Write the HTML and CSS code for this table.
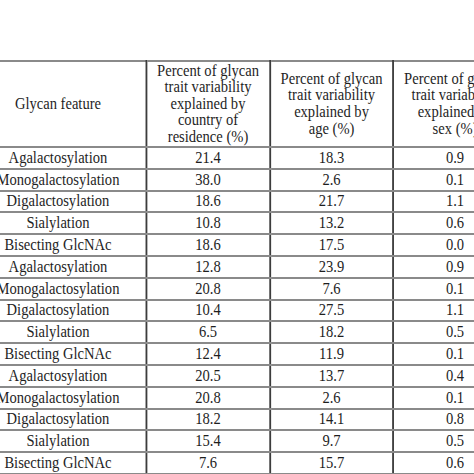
FILE: index.html
```html
<!DOCTYPE html>
<html>
<head>
<meta charset="utf-8">
<link rel="stylesheet" href="styles.css">
</head>
<body>
<table class="glycan-table">
  <colgroup>
    <col class="c-feature">
    <col class="c-num">
    <col class="c-num2">
    <col class="c-num">
  </colgroup>
  <thead>
    <tr class="head-row">
      <th>Glycan feature</th>
      <th>Percent of glycan<br>trait variability<br>explained by<br>country of<br>residence (%)</th>
      <th>Percent of glycan<br>trait variability<br>explained by<br>age (%)</th>
      <th>Percent of glycan<br>trait variability<br>explained by<br>sex (%)</th>
    </tr>
  </thead>
  <tbody>
    <tr><td>Agalactosylation</td><td>21.4</td><td>18.3</td><td>0.9</td></tr>
    <tr><td>Monogalactosylation</td><td>38.0</td><td>2.6</td><td>0.1</td></tr>
    <tr><td>Digalactosylation</td><td>18.6</td><td>21.7</td><td>1.1</td></tr>
    <tr><td>Sialylation</td><td>10.8</td><td>13.2</td><td>0.6</td></tr>
    <tr><td>Bisecting GlcNAc</td><td>18.6</td><td>17.5</td><td>0.0</td></tr>
    <tr><td>Agalactosylation</td><td>12.8</td><td>23.9</td><td>0.9</td></tr>
    <tr><td>Monogalactosylation</td><td>20.8</td><td>7.6</td><td>0.1</td></tr>
    <tr><td>Digalactosylation</td><td>10.4</td><td>27.5</td><td>1.1</td></tr>
    <tr><td>Sialylation</td><td>6.5</td><td>18.2</td><td>0.5</td></tr>
    <tr><td>Bisecting GlcNAc</td><td>12.4</td><td>11.9</td><td>0.1</td></tr>
    <tr><td>Agalactosylation</td><td>20.5</td><td>13.7</td><td>0.4</td></tr>
    <tr><td>Monogalactosylation</td><td>20.8</td><td>2.6</td><td>0.1</td></tr>
    <tr><td>Digalactosylation</td><td>18.2</td><td>14.1</td><td>0.8</td></tr>
    <tr><td>Sialylation</td><td>15.4</td><td>9.7</td><td>0.5</td></tr>
    <tr><td>Bisecting GlcNAc</td><td>7.6</td><td>15.7</td><td>0.6</td></tr>
  </tbody>
</table>
</body>
</html>
```
FILE: styles.css
```css
html, body {
  margin: 0;
  padding: 0;
  background: #ffffff;
  overflow: hidden;
}

body {
  font-family: "Liberation Serif", "Times New Roman", serif;
  font-size: 16px;
  color: #1e1e1e;
}

/* the source table is slightly condensed horizontally */
.glycan-table {
  margin-top: 60px;
  margin-left: -31px;
  border-collapse: collapse;
  table-layout: fixed;
  width: 602px;
  transform: scaleX(0.91);
  transform-origin: 0 0;
}

.c-feature { width: 193.5px; }
.c-num { width: 136.3px; }
.c-num2 { width: 135.2px; }

.glycan-table th,
.glycan-table td {
  border-top: 2px solid #8a8a8a;
  border-bottom: 2px solid #8a8a8a;
  border-left: 2px solid #3c3c3c;
  border-right: 2px solid #3c3c3c;
  padding: 0;
  text-align: center;
  vertical-align: middle;
  font-weight: normal;
  white-space: nowrap;
}

.head-row th {
  height: 84px;
  line-height: 16.6px;
}

.glycan-table tbody tr {
  height: 21.8px;
}

.glycan-table tbody td {
  line-height: 16px;
}
```
